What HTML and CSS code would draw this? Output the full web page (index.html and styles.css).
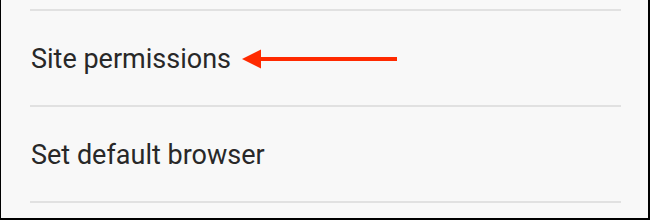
FILE: index.html
```html
<!DOCTYPE html>
<html>
<head>
<meta charset="utf-8">
<link rel="stylesheet" href="styles.css">
</head>
<body>
<div class="frame">
  <ul class="list">
    <li class="item">
      <span class="label">Site permissions</span>
      <svg class="arrow" width="155" height="20" viewBox="0 0 155 20" aria-hidden="true">
        <polygon points="0,10 19,0.5 19,19.5" fill="#ff2a00"/>
        <rect x="17" y="8" width="138" height="4" fill="#ff2a00"/>
      </svg>
    </li>
    <li class="item">
      <span class="label">Set default browser</span>
    </li>
  </ul>
</div>
</body>
</html>
```
FILE: styles.css
```css
html, body {
  margin: 0;
  padding: 0;
}
body {
  width: 650px;
  height: 220px;
  background: #f8f8f8;
}
.frame {
  box-sizing: border-box;
  width: 650px;
  height: 220px;
  background: #f8f8f8;
  border-left: 1px solid #000;
  border-right: 2px solid #000;
  border-bottom: 2px solid #000;
  padding: 9px 0 0 29px;
}
.list {
  list-style: none;
  margin: 0;
  padding: 0;
  width: 591px;
  border-bottom: 2px solid #e1e1e1;
}
.item {
  display: flex;
  align-items: center;
  border-top: 2px solid #e1e1e1;
  padding: 33px 0 31px 1px;
  height: 30px;
}
.label {
  font-family: Roboto, "Noto Sans", sans-serif;
  font-size: 27px;
  line-height: 30px;
  color: #282828;
}
.arrow {
  display: block;
  margin-left: 11px;
}
```
